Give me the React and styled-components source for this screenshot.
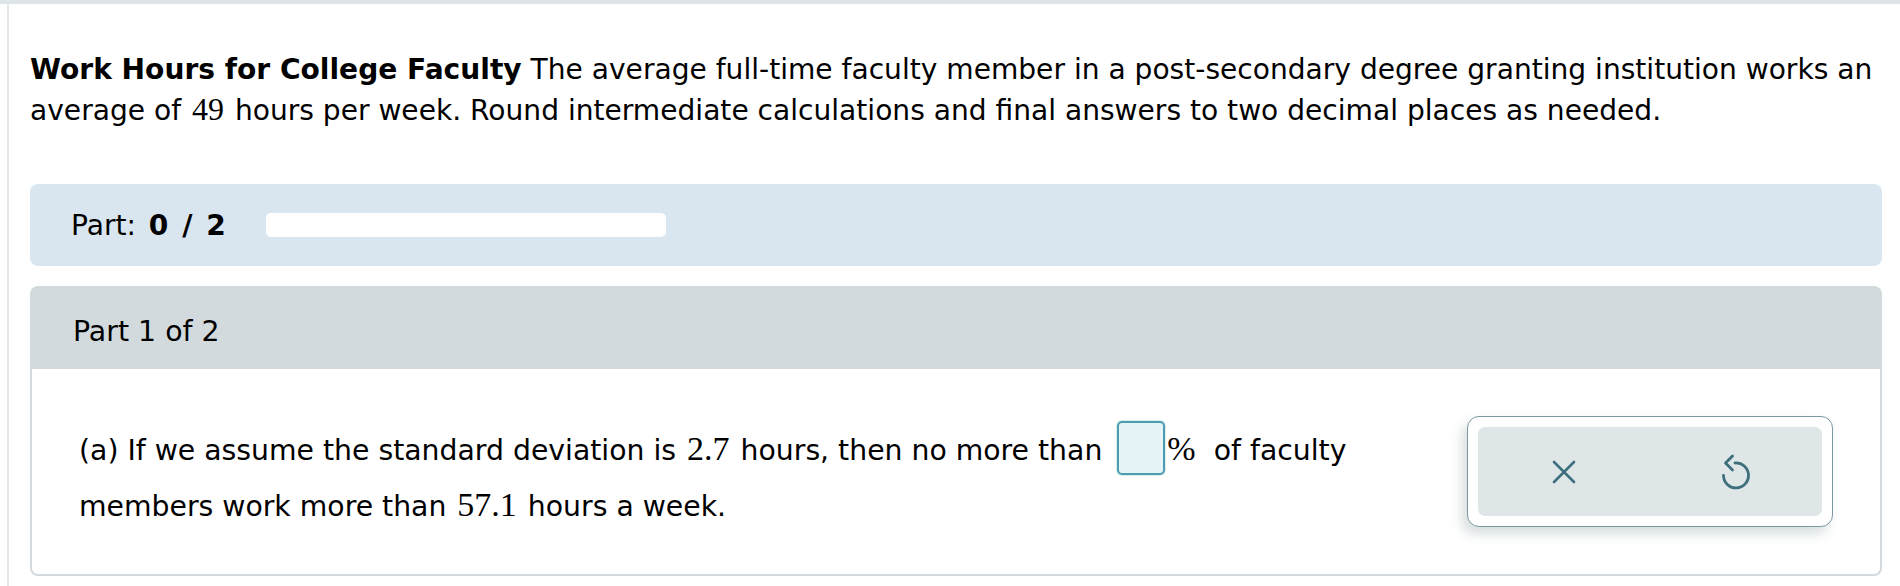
import styled, { createGlobalStyle } from "styled-components";

const GlobalStyle = createGlobalStyle`
  html, body {
    margin: 0;
    padding: 0;
    background: #fff;
  }
  body {
    font-family: "DejaVu Sans", Verdana, sans-serif;
    color: #000;
  }
`;

const Page = styled.div`
  border-top: 4px solid #dee5e8;
  min-height: 586px;
  box-sizing: border-box;
`;

const Frame = styled.div`
  margin-left: 7px;
  border-left: 2px solid #e2e8eb;
  padding: 45px 18px 0 21px;
  min-height: 582px;
  box-sizing: border-box;
`;

const Intro = styled.p`
  margin: 0;
  font-size: 28.1px;
  line-height: 41px;
  white-space: nowrap;
`;

const Bold = styled.b`
  font-weight: bold;
`;

const MathNum = styled.span`
  font-family: "Liberation Serif", "Times New Roman", serif;
  font-size: ${(p) => p.$size || 34}px;
  line-height: 1;
  margin: 0 ${(p) => (p.$gap != null ? p.$gap : 2)}px 0 2px;
`;

const ProgressPanel = styled.div`
  margin-top: 53px;
  height: 82px;
  border-radius: 8px;
  background: #dae6ef;
  display: flex;
  align-items: center;
  gap: 40px;
  padding-left: 41px;
  font-size: 28.1px;
`;

const ProgressLabel = styled.span`
  word-spacing: 4px;
`;

const Track = styled.div`
  width: 400px;
  height: 24px;
  border-radius: 5px;
  background: #fff;
`;

const Card = styled.section`
  margin-top: 20px;
`;

const CardHeader = styled.div`
  height: 83px;
  box-sizing: border-box;
  background: #d2dadd;
  border-radius: 8px 8px 0 0;
  display: flex;
  align-items: center;
  padding: 8px 0 0 43px;
  font-size: 28.4px;
`;

const CardBody = styled.div`
  border: 2px solid #d2dadd;
  border-top: none;
  border-radius: 0 0 8px 8px;
  display: flex;
  align-items: flex-start;
  padding: 47px 47px 39px 47px;
`;

const Question = styled.p`
  flex: 1;
  margin: 5px 0 0 0;
  font-size: 28.3px;
  line-height: 56px;
  white-space: nowrap;
`;

const AnswerBox = styled.span`
  display: inline-block;
  width: 48px;
  height: 54px;
  box-sizing: border-box;
  border: 2px solid #4d9db0;
  border-radius: 5px;
  background: #e6f4f8;
  box-shadow: 0 0 0 1px rgba(77, 157, 176, 0.2);
  vertical-align: -15px;
  margin: 0 0 0 15px;
`;

const ActionPanel = styled.div`
  flex: none;
  width: 366px;
  height: 111px;
  box-sizing: border-box;
  border: 1.5px solid #7a98a2;
  border-radius: 12px;
  background: #fff;
  padding: 10px;
  box-shadow: -5px 7px 12px rgba(40, 70, 80, 0.18);
`;

const ActionInner = styled.div`
  display: flex;
  height: 100%;
  background: #dfe6e8;
  border-radius: 7px;
`;

const ActionButton = styled.button`
  flex: 1;
  display: flex;
  align-items: center;
  justify-content: center;
  border: none;
  background: transparent;
  padding: 0;
  cursor: pointer;
  color: #3d6e7b;
`;

const CloseIcon = () => (
  <svg width="24" height="24" viewBox="0 0 24 24" fill="none">
    <path
      d="M2 2 L22 22 M22 2 L2 22"
      stroke="currentColor"
      strokeWidth="2.6"
      strokeLinecap="round"
    />
  </svg>
);

const ResetIcon = () => (
  <svg width="32" height="40" viewBox="0 0 32 40" fill="none">
    <path
      d="M15 11 A12.5 12.5 0 1 1 3.5 23.5"
      stroke="currentColor"
      strokeWidth="2.8"
      strokeLinecap="round"
    />
    <path
      d="M12.5 4 L5.5 11 L12.5 18"
      stroke="currentColor"
      strokeWidth="2.8"
      strokeLinecap="round"
      strokeLinejoin="round"
    />
  </svg>
);

const App = () => {
  return (
    <Page>
      <GlobalStyle />
      <Frame>
        <Intro>
          <Bold>Work Hours for College Faculty</Bold> The average full-time
          faculty member in a post-secondary degree granting institution works
          an
          <br />
          average of <MathNum $size={32}>49</MathNum> hours per week. Round
          intermediate calculations and final answers to two decimal places as
          needed.
        </Intro>

        <ProgressPanel>
          <ProgressLabel>
            Part: <Bold>0 / 2</Bold>
          </ProgressLabel>
          <Track />
        </ProgressPanel>

        <Card>
          <CardHeader>Part 1 of 2</CardHeader>
          <CardBody>
            <Question>
              (a) If we assume the standard deviation is <MathNum>2.7</MathNum>{" "}
              hours, then no more than
              <AnswerBox />
              <MathNum $gap={9}>%</MathNum> of faculty
              <br />
              members work more than <MathNum>57.1</MathNum> hours a week.
            </Question>
            <ActionPanel>
              <ActionInner>
                <ActionButton aria-label="Clear">
                  <CloseIcon />
                </ActionButton>
                <ActionButton aria-label="Reset">
                  <ResetIcon />
                </ActionButton>
              </ActionInner>
            </ActionPanel>
          </CardBody>
        </Card>
      </Frame>
    </Page>
  );
};

export default App;
